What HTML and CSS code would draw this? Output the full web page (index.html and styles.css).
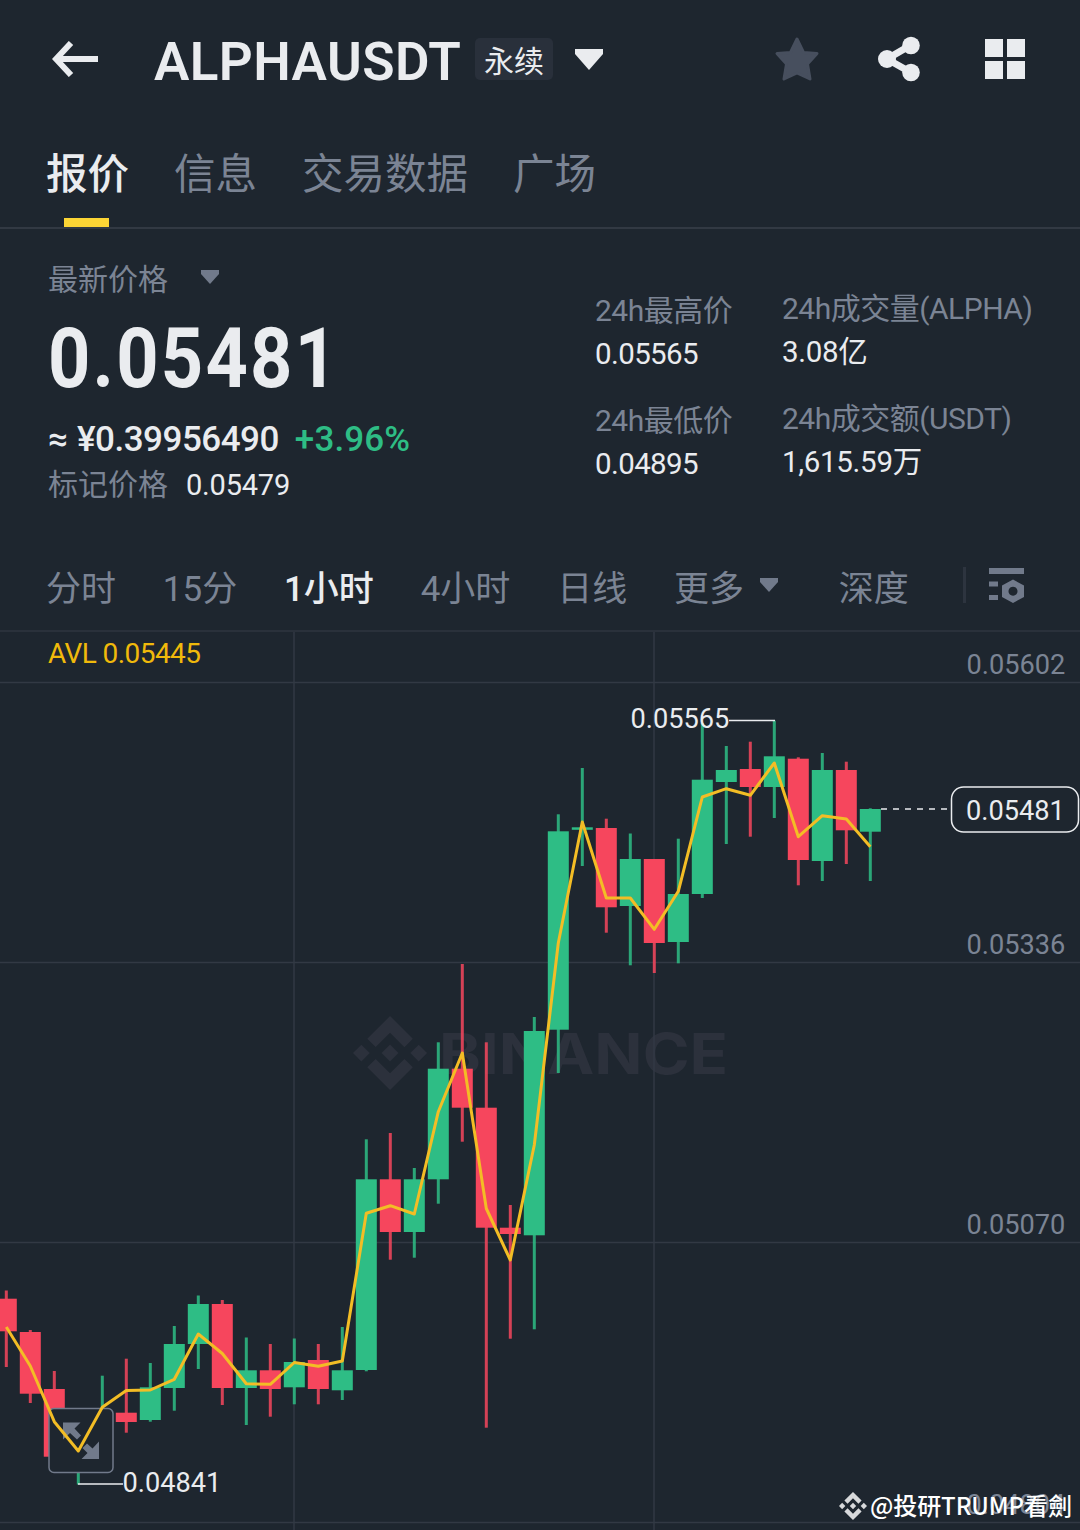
FILE: index.html
```html
<!DOCTYPE html>
<html lang="zh-CN">
<head>
    <meta charset="UTF-8">
    <meta name="viewport" content="width=device-width, initial-scale=1.0">
    <title>ALPHAUSDT 永续</title>
    <link rel="stylesheet" href="styles.css">
</head>
<body>
    <header class="header">
        <svg class="back" width="46" height="36" viewBox="0 0 46 36">
            <path d="M19 2 L4 18 L19 34 M4 18 H46" fill="none" stroke="#eaecef" stroke-width="6"/>
        </svg>
        <h1 class="symbol">ALPHAUSDT</h1>
        <span class="badge">永续</span>
        <svg class="caret-big" width="28" height="21" viewBox="0 0 28 21">
            <path d="M0 0H28V5L14 21L0 5Z" fill="#eaecef"/>
        </svg>
        <div class="actions">
            <svg width="46" height="46" viewBox="0 0 46 46">
                <path d="M23 3 L29.5 16.5 L43 17.5 L33.5 28 L36 43 L23 37 L10 43 L12.5 28 L3 17.5 L16.5 16.5 Z" fill="#474f5e" stroke="#474f5e" stroke-width="3" stroke-linejoin="round"/>
            </svg>
            <svg width="44" height="46" viewBox="0 0 44 46">
                <path d="M34 9 L10 23 L34 36.5" fill="none" stroke="#eaecef" stroke-width="7"/>
                <circle cx="10" cy="23" r="9" fill="#eaecef"/>
                <circle cx="34" cy="9.500" r="8.800" fill="#eaecef"/>
                <circle cx="34" cy="36.500" r="8.800" fill="#eaecef"/>
            </svg>
            <svg width="40" height="40" viewBox="0 0 40 40">
                <path d="M0 0h18v18H0z M22 0h18v18H22z M0 22h18v18H0z M22 22h18v18H22z" fill="#eaecef"/>
            </svg>
        </div>
    </header>

    <nav class="tabs">
        <span class="tab active">报价</span>
        <span class="tab">信息</span>
        <span class="tab">交易数据</span>
        <span class="tab">广场</span>
    </nav>

    <section class="ticker">
        <div class="price-box">
            <div class="label">最新价格
                <svg class="caret" width="18" height="14" viewBox="0 0 18 14"><path d="M0 0H18V4L9 14L0 4Z" fill="#717a8b"/></svg>
            </div>
            <div class="price">0.05481</div>
            <div class="fiat"><span class="approx">≈</span><span class="cny">¥0.39956490</span><span class="change">+3.96%</span></div>
            <div class="label mark">标记价格<span class="mark-price">0.05479</span></div>
        </div>
        <div class="stats stats-price">
            <div class="stat"><div class="label">24h最高价</div><div class="value">0.05565</div></div>
            <div class="stat"><div class="label">24h最低价</div><div class="value">0.04895</div></div>
        </div>
        <div class="stats stats-volume">
            <div class="stat"><div class="label">24h成交量(ALPHA)</div><div class="value">3.08亿</div></div>
            <div class="stat"><div class="label">24h成交额(USDT)</div><div class="value">1,615.59万</div></div>
        </div>
    </section>

    <nav class="intervals">
        <span>分时</span>
        <span class="digits">15分</span>
        <span class="active">1小时</span>
        <span>4小时</span>
        <span>日线</span>
        <span class="more">更多
            <svg class="caret" width="18" height="14" viewBox="0 0 18 14"><path d="M0 0H18V4L9 14L0 4Z" fill="#717a8b"/></svg>
        </span>
        <span class="depth">深度</span>
        <i class="divider"></i>
        <svg class="settings" width="36" height="36" viewBox="0 0 36 36">
            <path d="M1 1h35v6H1z M1 14.500h9v5H1z M1 28h9v5H1z" fill="#717a8b"/>
            <path fill-rule="evenodd" d="M25 12.500 L36 18.500 V30 L25 36 L14 30 V18.500 Z M25 19.700 a4.500 4.500 0 1 0 0.010 0 Z" fill="#717a8b"/>
        </svg>
    </nav>

    <main class="chart-box">
        <svg class="chart" width="1080" height="898" viewBox="0 632 1080 898">
            <defs>
                <g id="logo">
                    <path d="M38.730 53.200l24.590-24.580 24.600 24.600 14.300-14.310L63.320 0 24.420 38.900z"/>
                    <path d="M0 63.310l14.300-14.310 14.310 14.310-14.310 14.300z"/>
                    <path d="M38.730 73.410l24.590 24.590 24.600-24.600 14.310 14.290-38.900 38.910-38.910-38.880z"/>
                    <path d="M98 63.310l14.300-14.310 14.310 14.300-14.310 14.320z"/>
                    <path d="M77.830 63.300L63.320 48.780 48.770 63.300l14.550 14.530z"/>
                </g>
            </defs>

            <g class="watermark">
                <use href="#logo" transform="translate(353 1016) scale(0.585)"/>
                <text x="439" y="1073.500" textLength="289" lengthAdjust="spacingAndGlyphs">BINANCE</text>
            </g>

            <path class="grid" d="M0 682.500H1080 M0 962.500H1080 M0 1242.500H1080 M0 1522.500H1080 M294 632V1530 M654 632V1530"/>

            <g id="candles"></g>

            <!-- fullscreen button -->
            <rect class="expand" x="49" y="1408.500" width="64" height="64" rx="5"/>
            <path class="expand-icon" d="M63 1422.500H80.500L74.500 1428.500L81 1435.500L77 1439.500L70 1433L63 1439.500Z M99 1459H81.500L87.500 1453L82.500 1448L87 1443.500L92.500 1448.500L99 1441.500Z"/>

            <polyline id="avl" class="avl"/>

            <text class="avl-text" x="48" y="663" textLength="153">AVL 0.05445</text>
            <g class="axis">
                <text x="966.500" y="674">0.05602</text>
                <text x="966.500" y="954">0.05336</text>
                <text x="966.500" y="1234">0.05070</text>
                <text x="966.500" y="1514">0.04804</text>
            </g>

            <g class="marks">
                <path d="M729 720.500H775 M78 1484H123"/>
                <path d="M881 809H948" stroke-dasharray="6 6"/>
                <rect x="951.500" y="787" width="127" height="45" rx="12"/>
                <text x="630.500" y="727.500">0.05565</text>
                <text x="122.500" y="1492">0.04841</text>
                <text x="966" y="820">0.05481</text>
            </g>

            <g class="author">
                <use href="#logo" transform="translate(839 1492) scale(0.221)"/>
                <text x="870" y="1515" textLength="202">@投研TRUMP看劍</text>
            </g>
        </svg>
    </main>

    <script src="script.js"></script>
</body>
</html>
```
FILE: styles.css
```css
body {
    margin: 0;
    width: 1080px;
    height: 1530px;
    overflow: hidden;
    background-color: #1e262f;
    color: #eaecef;
    font-family: Roboto, "Noto Sans CJK SC", sans-serif;
}
svg {
    display: block;
    flex: none;
}

/* header */
.header {
    display: flex;
    align-items: center;
    height: 118px;
    padding: 0 55px 0 52px;
}
.symbol {
    margin: 6px 0 0 56px;
    width: 321px;
    font-size: 53px;
    font-weight: 600;
    line-height: 60px;
    letter-spacing: 0.4px;
}
.badge {
    width: 78px;
    height: 42px;
    border-radius: 5px;
    background-color: #29303b;
    font-size: 30px;
    line-height: 48px;
    text-align: center;
}
.caret-big {
    margin-left: 22px;
}
.actions {
    display: flex;
    align-items: center;
    margin-left: auto;
}
.actions svg + svg {
    margin-left: 57px;
}
.actions svg + svg + svg {
    margin-left: 64px;
}

/* tabs */
.tabs {
    display: flex;
    gap: 45px;
    height: 109px;
    padding-left: 46px;
    border-bottom: 2px solid #323943;
    font-size: 41.5px;
    line-height: 114px;
    color: #7b8494;
}
.tab.active {
    position: relative;
    font-weight: 500;
    color: #eaecef;
}
.tab.active::after {
    content: "";
    position: absolute;
    left: 18px;
    top: 100px;
    width: 45px;
    height: 9px;
    background-color: #fcd535;
}

/* ticker */
.ticker {
    display: flex;
    height: 316px;
    padding-left: 48px;
}
.label {
    display: flex;
    align-items: center;
    height: 44px;
    font-size: 30px;
    line-height: 44px;
    color: #7b8494;
    white-space: nowrap;
}
.price-box {
    width: 547px;
    padding-top: 29px;
}
.price-box .caret {
    margin: -6px 0 0 33px;
}
.price {
    height: 104px;
    font-size: 84px;
    font-weight: 700;
    line-height: 114px;
    letter-spacing: 2.5px;
    transform: scaleX(0.88);
    transform-origin: 0 0;
}
.fiat {
    display: flex;
    height: 57px;
    font-size: 35px;
    font-weight: 500;
    line-height: 68px;
    letter-spacing: -0.5px;
}
.approx {
    width: 29px;
}
.change {
    margin-left: 16px;
    letter-spacing: 0.1px;
    color: #2ebd85;
}
.mark-price {
    margin-left: 18px;
    font-size: 29px;
    letter-spacing: -0.2px;
    color: #eaecef;
}
.stats {
    padding-top: 60px;
}
.stats-price {
    width: 187px;
}
.stats-volume {
    padding-top: 58px;
}
.stat {
    height: 110px;
}
.stat .label {
    letter-spacing: -0.5px;
}
.value {
    font-size: 29.5px;
    line-height: 42px;
    letter-spacing: -0.3px;
}
.stats-price .value {
    letter-spacing: -0.6px;
}

/* intervals */
.intervals {
    display: flex;
    align-items: center;
    gap: 46.8px;
    height: 80px;
    padding: 0 0 5px 46px;
    border-bottom: 2px solid #2a313b;
    font-size: 35px;
    color: #7b8494;
}
.intervals .active {
    font-weight: 500;
    color: #eaecef;
}
.more {
    display: flex;
    align-items: center;
}
.more .caret {
    margin-left: 16px;
}
.depth {
    margin-left: 14px;
}
.divider {
    width: 3px;
    height: 36px;
    margin-left: 7px;
    background-color: #2d343f;
}
.settings {
    margin-left: -24px;
}

/* chart */
.grid {
    fill: none;
    stroke: #323944;
    stroke-width: 1.5;
}
.watermark {
    fill: #2c313c;
}
.watermark text {
    font-family: Inter, sans-serif;
    font-size: 56px;
    font-weight: 700;
}
.up {
    fill: #2ebd85;
}
.down {
    fill: #f6465d;
}
.wick {
    opacity: 0.85;
}
.avl {
    fill: none;
    stroke: #f3bd25;
    stroke-width: 3;
    stroke-linejoin: round;
}
.avl-text {
    font-size: 28px;
    fill: #f0b90b;
}
.axis {
    font-size: 27.2px;
    fill: #7b8494;
}
.marks {
    font-size: 27.2px;
    fill: #eaecef;
}
.marks path,
.marks rect {
    fill: none;
    stroke: #eaecef;
    stroke-width: 1.5;
}
.expand {
    fill: #1e262f;
    stroke: #717a8b;
    stroke-width: 1.5;
}
.expand-icon {
    fill: #717a8b;
}
.author {
    font-family: "Noto Sans CJK TC", sans-serif;
    font-size: 24px;
    font-weight: 500;
    fill: #ffffff;
}
.author use {
    fill: #d8d9db;
}
```
FILE: script.js
```js
// [direction, high, body top, body bottom, low, avl]
const candles = [
    ['down', 1290.5, 1298.7, 1331.3, 1367, 1327],
    ['down', 1330, 1332, 1393.7, 1403, 1366],
    ['down', 1371, 1389, 1456.7, 1456.7, 1421.7],
    ['up', 1412, 1420, 1455, 1484.5, 1451],
    ['up', 1375.7, 1412, 1430, 1440, 1407.3],
    ['down', 1358.7, 1412.7, 1422, 1432.7, 1390.5],
    ['up', 1363, 1387.3, 1420, 1421.7, 1390],
    ['up', 1326, 1344, 1388, 1410.7, 1379.3],
    ['up', 1295.5, 1304, 1344, 1369, 1334],
    ['down', 1300, 1304, 1388, 1405, 1353.5],
    ['up', 1337.5, 1370.3, 1388, 1425, 1383.7],
    ['down', 1344, 1370.3, 1389, 1416.7, 1384.3],
    ['up', 1338.5, 1362, 1387.3, 1404.3, 1362.5],
    ['down', 1344, 1360, 1389, 1404.3, 1366.3],
    ['up', 1327, 1370.3, 1390.3, 1400, 1361],
    ['up', 1139.3, 1179.3, 1370, 1371.3, 1213.3],
    ['down', 1133, 1179.3, 1232, 1259.7, 1205.7],
    ['up', 1168, 1179.3, 1232, 1257.7, 1214],
    ['up', 1042.3, 1068.7, 1179.3, 1203.7, 1111.7],
    ['down', 964, 1068.7, 1107.7, 1141.7, 1053],
    ['down', 1042.3, 1107.7, 1227.7, 1427.7, 1208.5],
    ['down', 1205, 1227.7, 1234, 1338.7, 1260],
    ['up', 1017, 1031, 1235.3, 1329.3, 1145],
    ['up', 814.3, 831.3, 1029.7, 1073, 943],
    ['up', 768, 827.3, 829.8, 866, 822],
    ['down', 818.7, 828, 907.3, 932.7, 898],
    ['up', 833.5, 859, 906, 965.3, 898],
    ['down', 859, 859, 943, 973, 929.3],
    ['up', 838.7, 894, 942, 963.3, 891.3],
    ['up', 723, 779.7, 894, 898, 797],
    ['up', 746, 770, 782, 844, 788.7],
    ['down', 741.7, 769, 787, 836.7, 795.3],
    ['up', 720.7, 756.3, 787, 818, 763],
    ['down', 757.3, 758.7, 860, 885.3, 836.7],
    ['up', 753, 770, 861, 881, 815.7],
    ['down', 761.7, 770, 830.3, 864, 819],
    ['up', 808.3, 809, 831.7, 881, 846.7]
];

let shapes = '';
let points = '';

candles.forEach(function ([dir, high, top, bottom, low, avl], i) {
    const x = 6.3 + i * 24;
    shapes += `<rect class="wick ${dir}" x="${x - 1.5}" y="${high}" width="3" height="${low - high}"/>`;
    shapes += `<rect class="${dir}" x="${x - 10.5}" y="${top}" width="21" height="${bottom - top}"/>`;
    points += `${x},${avl} `;
});

document.getElementById('candles').innerHTML = shapes;
document.getElementById('avl').setAttribute('points', points);
```
